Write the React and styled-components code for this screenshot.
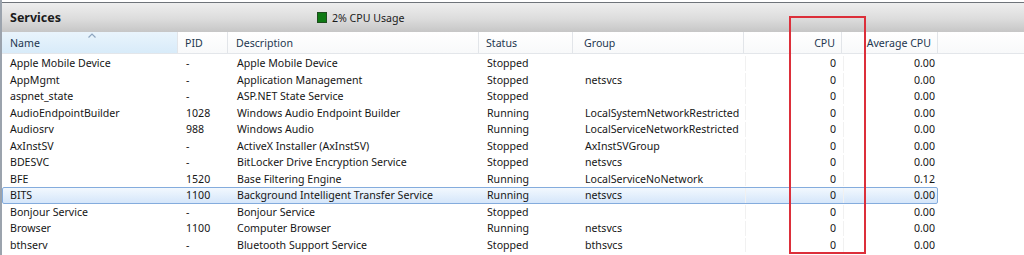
import React from "react";
import styled, { createGlobalStyle } from "styled-components";

const GlobalStyle = createGlobalStyle`
  html, body {
    margin: 0;
    padding: 0;
    background: #ffffff;
  }
  body {
    width: 1024px;
    height: 255px;
    overflow: hidden;
    font-family: "Noto Sans", "Open Sans", sans-serif;
  }
`;

const COLS = "176px 50px 251px 94px 171px 98px 96px";

const services = [
  ["Apple Mobile Device", "-", "Apple Mobile Device", "Stopped", "", "0", "0.00"],
  ["AppMgmt", "-", "Application Management", "Stopped", "netsvcs", "0", "0.00"],
  ["aspnet_state", "-", "ASP.NET State Service", "Stopped", "", "0", "0.00"],
  ["AudioEndpointBuilder", "1028", "Windows Audio Endpoint Builder", "Running", "LocalSystemNetworkRestricted", "0", "0.00"],
  ["Audiosrv", "988", "Windows Audio", "Running", "LocalServiceNetworkRestricted", "0", "0.00"],
  ["AxInstSV", "-", "ActiveX Installer (AxInstSV)", "Stopped", "AxInstSVGroup", "0", "0.00"],
  ["BDESVC", "-", "BitLocker Drive Encryption Service", "Stopped", "netsvcs", "0", "0.00"],
  ["BFE", "1520", "Base Filtering Engine", "Running", "LocalServiceNoNetwork", "0", "0.12"],
  ["BITS", "1100", "Background Intelligent Transfer Service", "Running", "netsvcs", "0", "0.00"],
  ["Bonjour Service", "-", "Bonjour Service", "Stopped", "", "0", "0.00"],
  ["Browser", "1100", "Computer Browser", "Running", "netsvcs", "0", "0.00"],
  ["bthserv", "-", "Bluetooth Support Service", "Stopped", "bthsvcs", "0", "0.00"],
];

const Panel = styled.div`
  position: relative;
  width: 1024px;
  height: 255px;
  border-left: 2px solid #9ba3ad;
  box-sizing: border-box;
  display: flex;
  flex-direction: column;
  background: #fff;
`;

const TitleBar = styled.div`
  height: 30px;
  margin-top: 2px;
  border-top: 1px solid #6f747a;
  box-sizing: border-box;
  background: linear-gradient(#eeeeee 0%, #dcdcdc 55%, #c6c6c6 100%);
  display: flex;
  align-items: center;
  padding-left: 8px;
`;

const Title = styled.div`
  font-weight: bold;
  font-size: 12.5px;
  color: #1b1b1b;
  width: 307px;
`;

const Usage = styled.div`
  display: flex;
  align-items: center;
  gap: 5px;
  font-size: 10.6px;
  color: #1b1b1b;
`;

const UsageSwatch = styled.span`
  width: 10px;
  height: 11px;
  background: #0f7a14;
  border: 1px solid #1e4d1e;
  box-sizing: border-box;
`;

const HeaderRow = styled.div`
  display: grid;
  grid-template-columns: ${COLS} 1fr;
  height: 21px;
  border-bottom: 1px solid #e3e6ea;
  background: #fff;
`;

const HeaderCell = styled.div`
  position: relative;
  display: flex;
  align-items: center;
  justify-content: ${(p) => (p.$right ? "flex-end" : "flex-start")};
  padding: ${(p) => (p.$right ? "0 6px 0 0" : `0 0 0 ${p.$pad || 7}px`)};
  font-size: 10.6px;
  color: #23364f;
  border-right: 1px solid #e2e5e9;
  background: ${(p) =>
    p.$sorted ? "linear-gradient(#e9f4fc, #d8ebf9)" : "linear-gradient(#ffffff, #f8f9fa)"};
  &:last-child {
    border-right: none;
  }
`;

const SortCaret = styled.svg`
  position: absolute;
  left: 86px;
  top: 1px;
`;

const Body = styled.div`
  display: flex;
  flex-direction: column;
  padding-top: 1px;
`;

const Row = styled.div`
  display: grid;
  grid-template-columns: ${COLS};
  width: 936px;
  height: 16.5px;
  box-sizing: border-box;
  border: 1px solid ${(p) => (p.$selected ? "#84acdd" : "transparent")};
  border-radius: 2px;
  background: ${(p) =>
    p.$selected ? "linear-gradient(#f2f8fe, #d5e6fa)" : "transparent"};
`;

const Cell = styled.div`
  display: flex;
  align-items: center;
  justify-content: ${(p) => (p.$right ? "flex-end" : "flex-start")};
  padding: ${(p) => (p.$right ? `0 ${p.$padR || 5}px 0 0` : `0 0 0 ${p.$pad || 7}px`)};
  font-size: 10.6px;
  color: #161616;
  white-space: nowrap;
  overflow: hidden;
  border-left: ${(p) => (p.$rule ? "1px solid #f1f1f1" : "none")};
`;

const Highlight = styled.div`
  position: absolute;
  left: 787px;
  top: 16px;
  width: 77px;
  height: 238px;
  border: 2px solid #dc2f3a;
  box-sizing: border-box;
  pointer-events: none;
`;

const headers = [
  { label: "Name", sorted: true, pad: 8 },
  { label: "PID", pad: 7 },
  { label: "Description", pad: 8 },
  { label: "Status", pad: 7 },
  { label: "Group", pad: 11 },
  { label: "CPU", right: true },
  { label: "Average CPU", right: true },
];

export default function App() {
  return (
    <>
      <GlobalStyle />
      <Panel>
        <TitleBar>
          <Title>Services</Title>
          <Usage>
            <UsageSwatch />
            2% CPU Usage
          </Usage>
        </TitleBar>
        <HeaderRow>
          {headers.map((h) => (
            <HeaderCell key={h.label} $sorted={h.sorted} $right={h.right} $pad={h.pad}>
              {h.sorted && (
                <SortCaret width="8" height="5" viewBox="0 0 8 5">
                  <path d="M0.5 4.5 L4 1 L7.5 4.5" fill="none" stroke="#8fa6c0" strokeWidth="1.2" />
                </SortCaret>
              )}
              {h.label}
            </HeaderCell>
          ))}
          <HeaderCell />
        </HeaderRow>
        <Body>
          {services.map((s) => (
            <Row key={s[0]} $selected={s[0] === "BITS"}>
              <Cell $pad={7}>{s[0]}</Cell>
              <Cell $pad={7}>{s[1]}</Cell>
              <Cell $pad={8}>{s[2]}</Cell>
              <Cell $pad={7}>{s[3]}</Cell>
              <Cell $pad={11}>{s[4]}</Cell>
              <Cell $right $padR={7} $rule>{s[5]}</Cell>
              <Cell $right $padR={4} $rule>{s[6]}</Cell>
            </Row>
          ))}
        </Body>
        <Highlight />
      </Panel>
    </>
  );
}
